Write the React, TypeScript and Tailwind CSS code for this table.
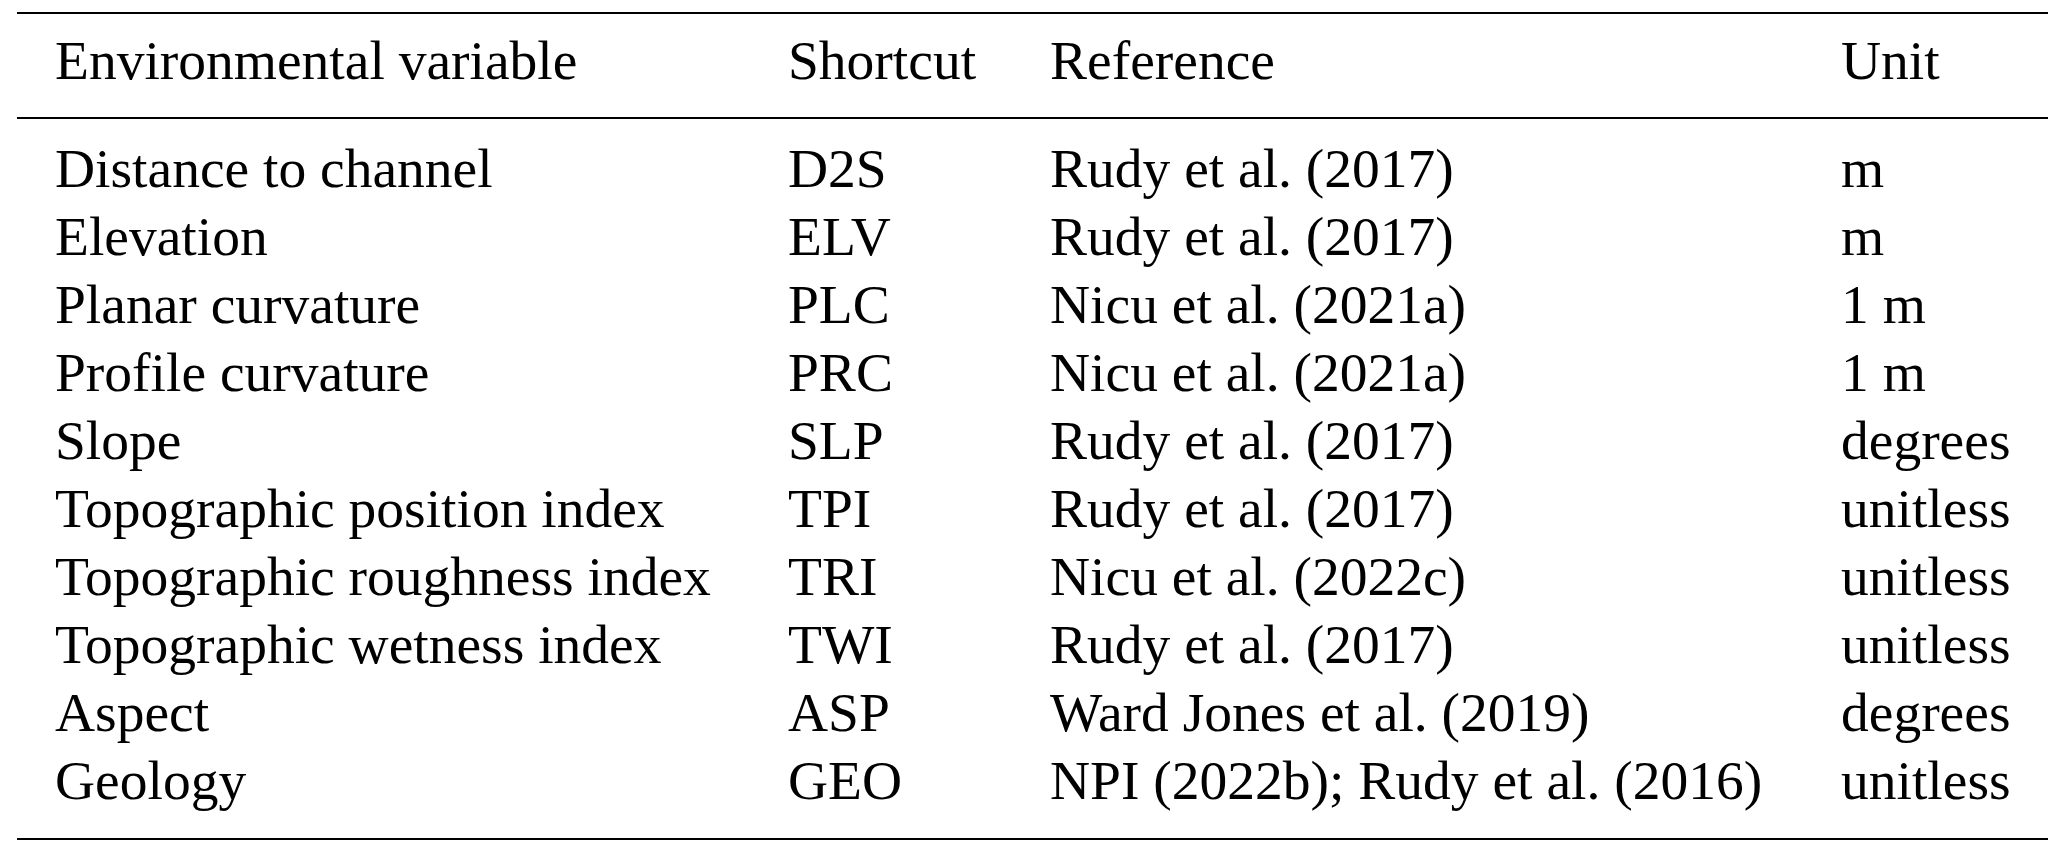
const rows = [
  ['Distance to channel', 'D2S', 'Rudy et al. (2017)', 'm'],
  ['Elevation', 'ELV', 'Rudy et al. (2017)', 'm'],
  ['Planar curvature', 'PLC', 'Nicu et al. (2021a)', '1 m'],
  ['Profile curvature', 'PRC', 'Nicu et al. (2021a)', '1 m'],
  ['Slope', 'SLP', 'Rudy et al. (2017)', 'degrees'],
  ['Topographic position index', 'TPI', 'Rudy et al. (2017)', 'unitless'],
  ['Topographic roughness index', 'TRI', 'Nicu et al. (2022c)', 'unitless'],
  ['Topographic wetness index', 'TWI', 'Rudy et al. (2017)', 'unitless'],
  ['Aspect', 'ASP', 'Ward Jones et al. (2019)', 'degrees'],
  ['Geology', 'GEO', 'NPI (2022b); Rudy et al. (2016)', 'unitless'],
];

const cols = 'grid grid-cols-[733px_262px_791px_1fr] pl-[38px]';

export default function App() {
  return (
    <div className="w-[2067px] h-[853px] bg-white pt-[12px] pl-[17px] text-black font-['Liberation_Serif',serif] text-[55.5px] leading-[68px]">
      <div className="w-[2031px] border-t-2 border-b-2 border-black">
        <div className={`${cols} pt-[13px] pb-[22px] border-b-2 border-black`}>
          <div>Environmental variable</div>
          <div>Shortcut</div>
          <div>Reference</div>
          <div>Unit</div>
        </div>
        <div className="pt-[16px] pb-[23px]">
          {rows.map((r) => (
            <div key={r[1]} className={`${cols} h-[68px]`}>
              {r.map((c, i) => (
                <div key={i} className="whitespace-nowrap">{c}</div>
              ))}
            </div>
          ))}
        </div>
      </div>
    </div>
  );
}
